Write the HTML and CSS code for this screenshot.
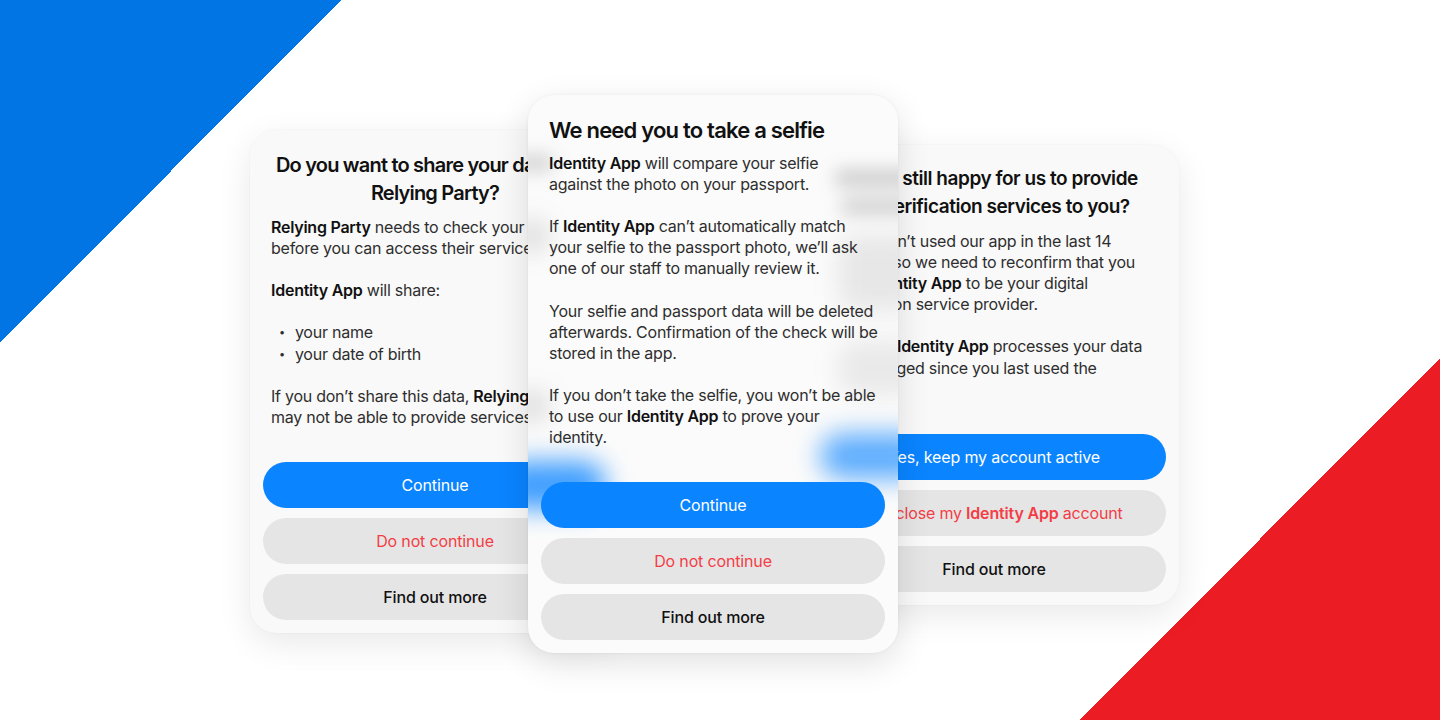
FILE: index.html
```html
<!DOCTYPE html>
<html lang="en">
<head>
<meta charset="utf-8">
<title>Identity App screens</title>
<link rel="stylesheet" href="styles.css">
</head>
<body>
<main class="stage">
  <section class="card card--left">
    <div class="content">
      <h2 class="title title--center">Do you want to share your data with<br>Relying Party?</h2>
      <p><b>Relying Party</b> needs to check your details<br>before you can access their services.</p>
      <p><b>Identity App</b> will share:</p>
      <ul class="list">
        <li>your name</li>
        <li>your date of birth</li>
      </ul>
      <p>If you don’t share this data, <b>Relying Party</b><br>may not be able to provide services to you.</p>
    </div>
    <div class="actions">
      <div class="btn btn--primary">Continue</div>
      <div class="btn btn--danger">Do not continue</div>
      <div class="btn btn--plain">Find out more</div>
    </div>
  </section>

  <section class="card card--center">
    <span class="blob blob--blue-left"></span>
    <span class="blob blob--blue-right"></span>
    <span class="blob blob--ink-l1"></span>
    <span class="blob blob--ink-l2"></span>
    <span class="blob blob--ink-l3"></span>
    <span class="blob blob--ink-r1"></span>
    <span class="blob blob--ink-r2"></span>
    <span class="blob blob--ink-r3"></span>
    <span class="blob blob--ink-r4"></span>
    <div class="content">
      <h2 class="title title--large">We need you to take a selfie</h2>
      <p><b>Identity App</b> will compare your selfie<br>against the photo on your passport.</p>
      <p>If <b>Identity App</b> can’t automatically match<br>your selfie to the passport photo, we’ll ask<br>one of our staff to manually review it.</p>
      <p>Your selfie and passport data will be deleted<br>afterwards. Confirmation of the check will be<br>stored in the app.</p>
      <p>If you don’t take the selfie, you won’t be able<br>to use our <b>Identity App</b> to prove your<br>identity.</p>
    </div>
    <div class="actions">
      <div class="btn btn--primary">Continue</div>
      <div class="btn btn--danger">Do not continue</div>
      <div class="btn btn--plain">Find out more</div>
    </div>
  </section>

  <section class="card card--right">
    <div class="content">
      <h2 class="title title--small">Are you still happy for us to provide<br>these verification services to you?</h2>
      <p>You haven’t used our app in the last 14<br>months, so we need to reconfirm that you<br>want <b>Identity App</b> to be your digital<br>verification service provider.</p>
      <p>The way <b>Identity App</b> processes your data<br>has changed since you last used the<br>app.</p>
    </div>
    <div class="actions">
      <div class="btn btn--primary">Yes, keep my account active</div>
      <div class="btn btn--danger">No, close my <b>Identity App</b> account</div>
      <div class="btn btn--plain">Find out more</div>
    </div>
  </section>
</main>
</body>
</html>
```

FILE: styles.css
```css
* { box-sizing: border-box; }

html, body {
  margin: 0;
  padding: 0;
}

body {
  width: 1440px;
  height: 720px;
  overflow: hidden;
  font-family: Inter, "Liberation Sans", sans-serif;
  color: #2e2e2e;
  background-color: #ffffff;
  background-image:
    linear-gradient(to bottom right, #0075e3 50%, rgba(0,117,227,0) 50%),
    linear-gradient(to bottom right, rgba(236,28,36,0) 50%, #ec1c24 50%);
  background-repeat: no-repeat;
  background-size: 341px 343px, 360px 362px;
  background-position: left top, right bottom;
}

.stage {
  display: flex;
  align-items: flex-start;
  height: 720px;
  padding: 95px 0 0 250px;
}

.card {
  flex: none;
  width: 370px;
  display: flex;
  flex-direction: column;
  padding: 21px 13px 13px;
  border-radius: 26px;
  background: #f9f9f9;
  box-shadow: 0 10px 34px rgba(0, 0, 0, 0.09), 0 0 2px rgba(0, 0, 0, 0.05);
  overflow: hidden;
}

.card--left {
  margin-top: 35px;
  z-index: 1;
}

.card--center {
  position: relative;
  margin-left: -92px;
  z-index: 2;
  background: #fbfbfb;
  box-shadow: 0 10px 34px rgba(0, 0, 0, 0.12), 0 0 3px rgba(0, 0, 0, 0.06);
}

.card--center .content,
.card--center .actions {
  position: relative;
  z-index: 1;
}

/* soft shapes of the cards seen through the frosted centre card */
.blob {
  position: absolute;
  z-index: 0;
  border-radius: 24px;
  filter: blur(13px);
}

.blob--blue-left {
  left: -30px;
  top: 366px;
  width: 108px;
  height: 48px;
  background: rgba(10, 132, 255, 0.78);
}

.blob--blue-right {
  left: 292px;
  top: 338px;
  width: 110px;
  height: 46px;
  background: rgba(10, 132, 255, 0.65);
}

.blob--ink-l1 {
  left: -14px;
  top: 60px;
  width: 40px;
  height: 16px;
  border-radius: 8px;
  background: rgba(60, 60, 60, 0.22);
  filter: blur(9px);
}

.blob--ink-l2 {
  left: -16px;
  top: 124px;
  width: 38px;
  height: 34px;
  border-radius: 14px;
  background: rgba(80, 80, 80, 0.14);
  filter: blur(11px);
}

.blob--ink-l3 {
  left: -16px;
  top: 294px;
  width: 38px;
  height: 34px;
  border-radius: 14px;
  background: rgba(80, 80, 80, 0.14);
  filter: blur(11px);
}

.blob--ink-r1 {
  left: 306px;
  top: 75px;
  width: 84px;
  height: 16px;
  border-radius: 8px;
  background: rgba(60, 60, 60, 0.26);
  filter: blur(9px);
}

.blob--ink-r2 {
  left: 312px;
  top: 104px;
  width: 80px;
  height: 15px;
  border-radius: 8px;
  background: rgba(60, 60, 60, 0.24);
  filter: blur(9px);
}

.blob--ink-r3 {
  left: 310px;
  top: 140px;
  width: 84px;
  height: 76px;
  border-radius: 18px;
  background: rgba(90, 90, 90, 0.12);
  filter: blur(12px);
}

.blob--ink-r4 {
  left: 310px;
  top: 246px;
  width: 84px;
  height: 54px;
  border-radius: 18px;
  background: rgba(90, 90, 90, 0.11);
  filter: blur(12px);
}

.card--right {
  margin-left: -89px;
  margin-top: 50px;
  padding-top: 20px;
  z-index: 1;
}

.content {
  padding: 0 8px;
  font-size: 16px;
  line-height: 21.1px;
  letter-spacing: -0.25px;
  white-space: nowrap;
}

.title {
  margin: 0 0 10px;
  font-size: 20px;
  line-height: 28px;
  font-weight: 600;
  color: #111111;
  letter-spacing: -0.5px;
}

.title--center {
  text-align: center;
  margin-left: -40px;
  margin-right: -40px;
  letter-spacing: -0.8px;
}

.title--large {
  font-size: 22px;
  margin-bottom: 9px;
  letter-spacing: -0.8px;
}

.title--small {
  font-size: 19px;
  letter-spacing: -0.45px;
}

.content p {
  margin: 0 0 21.1px;
}

.content p:last-child {
  margin-bottom: 0;
}

.content b {
  font-weight: 600;
  color: #111111;
}

.list {
  list-style: none;
  margin: 0 0 21.1px;
  padding: 0 0 0 8px;
}

.list li {
  display: flex;
  gap: 10px;
}

.list li::before {
  content: "•";
  font-size: 11px;
}

.actions {
  display: flex;
  flex-direction: column;
  gap: 10px;
  margin-top: 34px;
}

.btn {
  height: 46px;
  border-radius: 23px;
  display: flex;
  align-items: center;
  justify-content: center;
  font-size: 16px;
  letter-spacing: -0.15px;
  white-space: nowrap;
}

.btn--primary {
  background: #0a84ff;
  color: #ffffff;
}

.btn--danger {
  background: #e5e5e5;
  color: #f43d45;
}

.btn--danger b {
  font-weight: 600;
  margin: 0 0.25em;
}

.btn--plain {
  background: #e5e5e5;
  color: #111111;
  font-weight: 500;
}
```
